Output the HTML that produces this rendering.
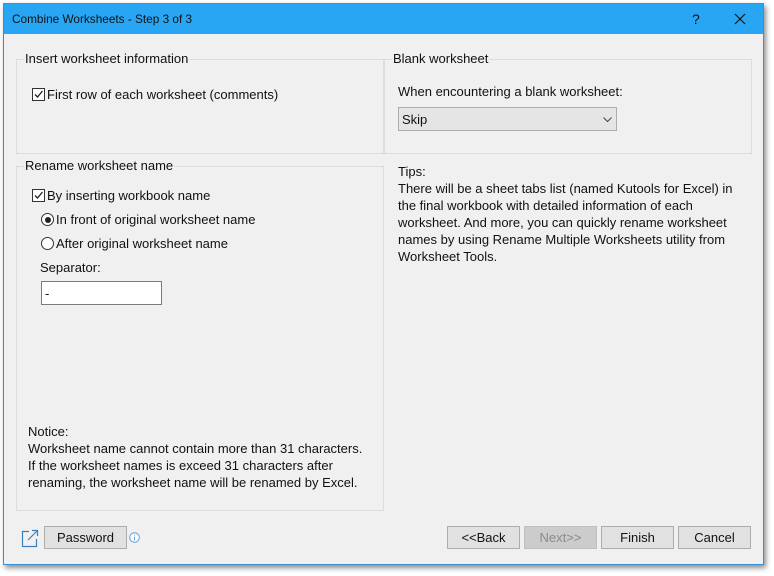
<!DOCTYPE html>
<html><head><meta charset="utf-8"><style>
*{box-sizing:border-box;margin:0;padding:0}
body{width:774px;height:576px;background:#fff;position:relative;overflow:hidden;font-family:"Liberation Sans","Noto Sans CJK SC",sans-serif;font-size:13px;color:#111}
.win{position:absolute;left:3px;top:3px;width:761px;height:562px;background:#f0f0f0;border:1px solid #3a90d0;box-shadow:2px 3px 5px rgba(0,0,0,.45)}
.title{position:absolute;left:0;top:0;width:759px;height:30px;background:#29a6f3;color:#111;font-size:11.8px}
.a{position:absolute;white-space:nowrap}
.box{position:absolute;border:1px solid #dcdcdc}
.leg{position:absolute;background:#f0f0f0;padding:0 1px;top:-9px;white-space:nowrap}
.cb{position:absolute;width:13px;height:13px;border:1px solid #333;background:#fff}
.rb{position:absolute;width:13px;height:13px;border:1px solid #333;border-radius:50%;background:#fff}
.btn{position:absolute;height:23px;border:1px solid #adadad;background:#e1e1e1;text-align:center;line-height:21px}
</style></head><body>
<div class="win">
<div class="title"><span class="a" style="left:8px;top:8px">Combine Worksheets - Step 3 of 3</span>
<span class="a" style="left:688px;top:7px;font-size:14px">?</span>
<svg class="a" style="left:730px;top:9px" width="12" height="12"><path d="M1 1L11 11M11 1L1 11" stroke="#111" stroke-width="1.2"/></svg></div>

<div class="box" style="left:12px;top:55px;width:368px;height:95px"><span class="leg" style="left:7px">Insert worksheet information</span></div>
<div class="cb" style="left:28px;top:84px"><svg width="11" height="11" style="position:absolute;left:0;top:0"><path d="M2 5.5L4.5 8L9.5 2" stroke="#222" stroke-width="1.3" fill="none"/></svg></div>
<span class="a" style="left:43px;top:83px">First row of each worksheet (comments)</span>

<div class="box" style="left:380px;top:55px;width:368px;height:95px"><span class="leg" style="left:7px">Blank worksheet</span></div>
<span class="a" style="left:394px;top:80px">When encountering a blank worksheet:</span>
<div class="a" style="left:394px;top:103px;width:219px;height:24px;border:1px solid #adadad;background:#e5e5e5"><span class="a" style="left:3px;top:4px">Skip</span>
<svg class="a" style="left:204px;top:9px" width="9" height="6"><path d="M0.5 0.5L4.5 4.5L8.5 0.5" stroke="#444" fill="none"/></svg></div>

<div class="box" style="left:12px;top:162px;width:368px;height:345px"><span class="leg" style="left:7px">Rename worksheet name</span></div>
<div class="cb" style="left:28px;top:185px"><svg width="11" height="11" style="position:absolute;left:0;top:0"><path d="M2 5.5L4.5 8L9.5 2" stroke="#222" stroke-width="1.3" fill="none"/></svg></div>
<span class="a" style="left:43px;top:184px">By inserting workbook name</span>
<div class="rb" style="left:37px;top:209px"><div style="position:absolute;left:2.5px;top:2.5px;width:6px;height:6px;border-radius:50%;background:#222"></div></div>
<span class="a" style="left:52px;top:208px">In front of original worksheet name</span>
<div class="rb" style="left:37px;top:233px"></div>
<span class="a" style="left:52px;top:232px">After original worksheet name</span>
<span class="a" style="left:36px;top:256px">Separator:</span>
<div class="a" style="left:37px;top:277px;width:121px;height:24px;border:1px solid #7a7a7a;background:#fff"><span class="a" style="left:3px;top:4px">-</span></div>
<div class="a" style="left:24px;top:419px;line-height:17px">Notice:<br>Worksheet name cannot contain more than 31 characters.<br>If the worksheet names is exceed 31 characters after<br>renaming, the worksheet name will be renamed by Excel.</div>

<div class="a" style="left:394px;top:159px;line-height:17px">Tips:<br>There will be a sheet tabs list (named Kutools for Excel) in<br>the final workbook with detailed information of each<br>worksheet. And more, you can quickly rename worksheet<br>names by using Rename Multiple Worksheets utility from<br>Worksheet Tools.</div>

<svg class="a" style="left:17px;top:525px" width="18" height="19"><path d="M8 2.5H1.5V17.5H15.5V10" stroke="#3a7fc0" fill="none" stroke-width="1.2"/><path d="M7 11L16 2M11 1.5H16.5V7" stroke="#3a7fc0" fill="none" stroke-width="1.2"/></svg>
<div class="btn" style="left:40px;top:522px;width:83px">Password</div>
<svg class="a" style="left:125px;top:528px" width="11" height="11"><circle cx="5.5" cy="5.5" r="4.8" stroke="#6aa0d8" fill="#fff"/><path d="M5.5 4.5V8.5M5.5 2.5V3.5" stroke="#6aa0d8"/></svg>
<div class="btn" style="left:443px;top:522px;width:73px">&lt;&lt;Back</div>
<div class="btn" style="left:520px;top:522px;width:73px;background:#cccccc;border-color:#bfbfbf;color:#8a8a8a">Next&gt;&gt;</div>
<div class="btn" style="left:597px;top:522px;width:73px">Finish</div>
<div class="btn" style="left:674px;top:522px;width:73px">Cancel</div>
</div>
</body></html>
